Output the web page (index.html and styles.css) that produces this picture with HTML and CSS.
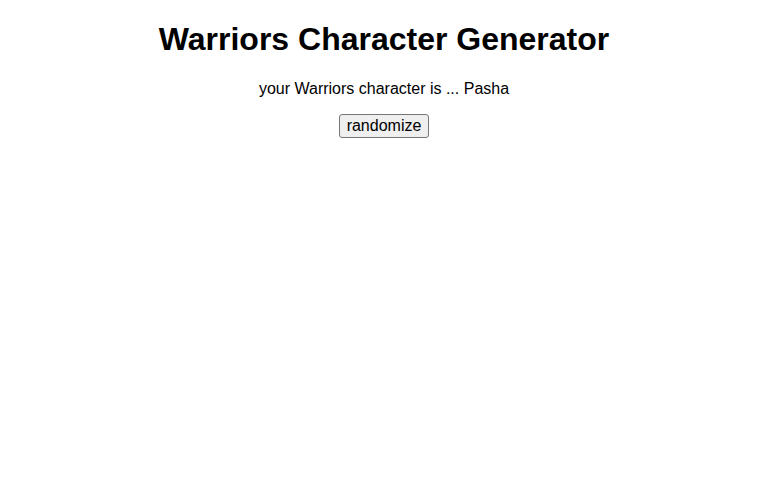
FILE: index.html
```html
<!DOCTYPE html>
<html>
<head>
<meta charset="utf-8">
<title>Warriors Character Generator</title>
<link rel="stylesheet" href="styles.css">
</head>
<body>
<main class="app">
<h1 class="title">Warriors Character Generator</h1>
<p class="result">your Warriors character is ... Pasha</p>
<button class="randomize">randomize</button>
</main>
</body>
</html>
```
FILE: styles.css
```css
body {
  margin: 0;
  padding: 0 8px;
  font-family: "Liberation Sans", Arial, sans-serif;
  color: #000;
  background: #fff;
}
.app {
  text-align: center;
}
.title {
  font-size: 32px;
  font-weight: bold;
  margin: 21.44px 0;
}
.result {
  font-size: 16px;
  margin: 16px 0;
}
.randomize {
  font-family: "Liberation Sans", Arial, sans-serif;
  font-size: 16px;
  padding: 2px 7px;
  border: 1px solid #767676;
  border-radius: 3px;
  background: #efefef;
  color: #000;
}
```
